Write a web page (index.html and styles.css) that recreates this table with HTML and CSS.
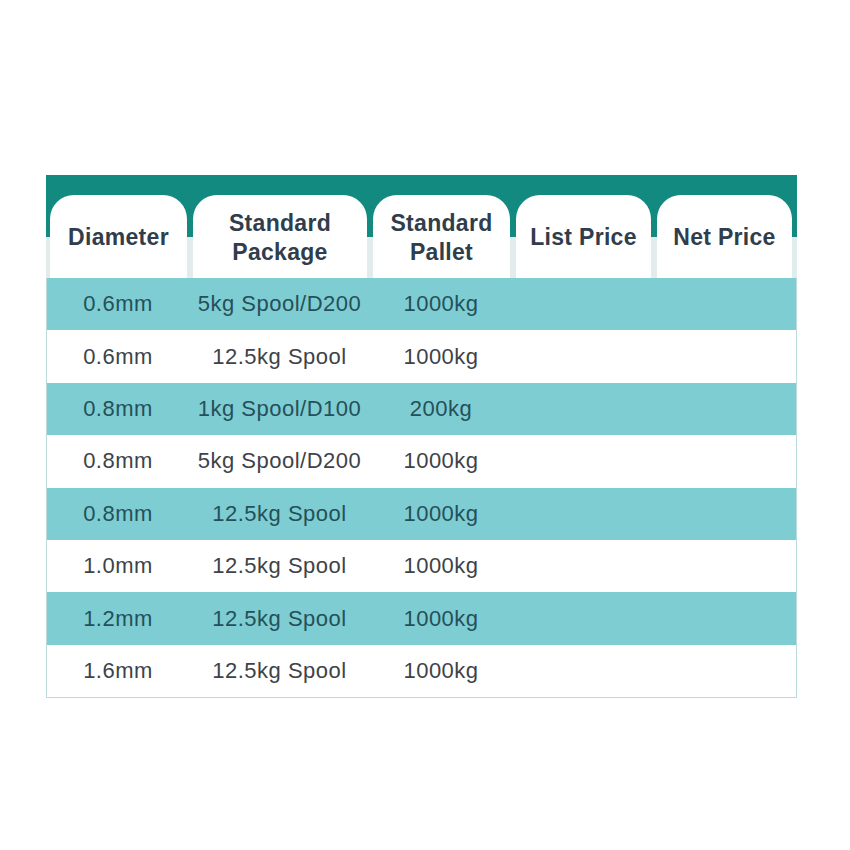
FILE: index.html
```html
<!DOCTYPE html>
<html>
<head>
<meta charset="utf-8">
<link rel="stylesheet" href="styles.css">
</head>
<body>
<div class="table">
  <div class="head">
    <div class="tab">Diameter</div>
    <div class="tab">Standard<br>Package</div>
    <div class="tab">Standard<br>Pallet</div>
    <div class="tab">List Price</div>
    <div class="tab">Net Price</div>
  </div>
  <div class="body">
    <div class="row alt"><span>0.6mm</span><span>5kg Spool/D200</span><span>1000kg</span><span></span><span></span></div>
    <div class="row"><span>0.6mm</span><span>12.5kg Spool</span><span>1000kg</span><span></span><span></span></div>
    <div class="row alt"><span>0.8mm</span><span>1kg Spool/D100</span><span>200kg</span><span></span><span></span></div>
    <div class="row"><span>0.8mm</span><span>5kg Spool/D200</span><span>1000kg</span><span></span><span></span></div>
    <div class="row alt"><span>0.8mm</span><span>12.5kg Spool</span><span>1000kg</span><span></span><span></span></div>
    <div class="row"><span>1.0mm</span><span>12.5kg Spool</span><span>1000kg</span><span></span><span></span></div>
    <div class="row alt"><span>1.2mm</span><span>12.5kg Spool</span><span>1000kg</span><span></span><span></span></div>
    <div class="row"><span>1.6mm</span><span>12.5kg Spool</span><span>1000kg</span><span></span><span></span></div>
  </div>
</div>
</body>
</html>
```
FILE: styles.css
```css
html, body {
  margin: 0;
  padding: 0;
  background: #ffffff;
}
body {
  font-family: "Liberation Sans", Arial, sans-serif;
}
.table {
  margin: 175px 0 0 46px;
  width: 751px;
}
.head {
  display: grid;
  grid-template-columns: 137px 174px 137px 135px 135px;
  column-gap: 6px;
  padding: 20px 4px 0 4px;
  height: 103px;
  box-sizing: border-box;
  background: linear-gradient(#138a7f 0, #138a7f 62px, #e2ecec 62px, #e2ecec 100%);
}
.tab {
  background: #ffffff;
  border-radius: 24px 24px 0 0;
  display: flex;
  align-items: center;
  justify-content: center;
  text-align: center;
  font-weight: bold;
  font-size: 23px;
  letter-spacing: 0.3px;
  line-height: 29px;
  color: #2f3d4c;
  padding-top: 2px;
}
.body {
  border: 1.5px solid #bcd9db;
  border-top: none;
}
.row {
  display: grid;
  grid-template-columns: 137px 174px 137px 135px 135px;
  column-gap: 6px;
  padding: 0 2.5px;
  height: 52.4px;
  align-items: center;
  text-align: center;
  font-size: 22px;
  letter-spacing: 0.5px;
  color: #3d4349;
  background: #ffffff;
}
.row.alt {
  background: #7ecdd2;
  color: #25505a;
}
```
